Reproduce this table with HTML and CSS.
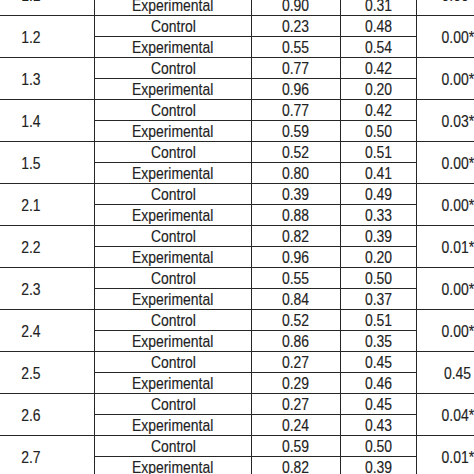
FILE: index.html
```html
<!DOCTYPE html>
<html>
<head>
<meta charset="utf-8">
<link rel="stylesheet" href="styles.css">
</head>
<body>
<div class="viewport">
<table class="stats">
<colgroup>
<col class="c-item"><col class="c-group"><col class="c-mean"><col class="c-sd"><col class="c-p">
</colgroup>
<tbody>
<tr><td rowspan="2"><span>1.1</span></td><td><span>Control</span></td><td><span>0.55</span></td><td><span>0.50</span></td><td rowspan="2"><span>0.00*</span></td></tr>
<tr><td><span>Experimental</span></td><td><span>0.90</span></td><td><span>0.31</span></td></tr>
<tr><td rowspan="2"><span>1.2</span></td><td><span>Control</span></td><td><span>0.23</span></td><td><span>0.48</span></td><td rowspan="2"><span>0.00*</span></td></tr>
<tr><td><span>Experimental</span></td><td><span>0.55</span></td><td><span>0.54</span></td></tr>
<tr><td rowspan="2"><span>1.3</span></td><td><span>Control</span></td><td><span>0.77</span></td><td><span>0.42</span></td><td rowspan="2"><span>0.00*</span></td></tr>
<tr><td><span>Experimental</span></td><td><span>0.96</span></td><td><span>0.20</span></td></tr>
<tr><td rowspan="2"><span>1.4</span></td><td><span>Control</span></td><td><span>0.77</span></td><td><span>0.42</span></td><td rowspan="2"><span>0.03*</span></td></tr>
<tr><td><span>Experimental</span></td><td><span>0.59</span></td><td><span>0.50</span></td></tr>
<tr><td rowspan="2"><span>1.5</span></td><td><span>Control</span></td><td><span>0.52</span></td><td><span>0.51</span></td><td rowspan="2"><span>0.00*</span></td></tr>
<tr><td><span>Experimental</span></td><td><span>0.80</span></td><td><span>0.41</span></td></tr>
<tr><td rowspan="2"><span>2.1</span></td><td><span>Control</span></td><td><span>0.39</span></td><td><span>0.49</span></td><td rowspan="2"><span>0.00*</span></td></tr>
<tr><td><span>Experimental</span></td><td><span>0.88</span></td><td><span>0.33</span></td></tr>
<tr><td rowspan="2"><span>2.2</span></td><td><span>Control</span></td><td><span>0.82</span></td><td><span>0.39</span></td><td rowspan="2"><span>0.01*</span></td></tr>
<tr><td><span>Experimental</span></td><td><span>0.96</span></td><td><span>0.20</span></td></tr>
<tr><td rowspan="2"><span>2.3</span></td><td><span>Control</span></td><td><span>0.55</span></td><td><span>0.50</span></td><td rowspan="2"><span>0.00*</span></td></tr>
<tr><td><span>Experimental</span></td><td><span>0.84</span></td><td><span>0.37</span></td></tr>
<tr><td rowspan="2"><span>2.4</span></td><td><span>Control</span></td><td><span>0.52</span></td><td><span>0.51</span></td><td rowspan="2"><span>0.00*</span></td></tr>
<tr><td><span>Experimental</span></td><td><span>0.86</span></td><td><span>0.35</span></td></tr>
<tr><td rowspan="2"><span>2.5</span></td><td><span>Control</span></td><td><span>0.27</span></td><td><span>0.45</span></td><td rowspan="2"><span>0.45</span></td></tr>
<tr><td><span>Experimental</span></td><td><span>0.29</span></td><td><span>0.46</span></td></tr>
<tr><td rowspan="2"><span>2.6</span></td><td><span>Control</span></td><td><span>0.27</span></td><td><span>0.45</span></td><td rowspan="2"><span>0.04*</span></td></tr>
<tr><td><span>Experimental</span></td><td><span>0.24</span></td><td><span>0.43</span></td></tr>
<tr><td rowspan="2"><span>2.7</span></td><td><span>Control</span></td><td><span>0.59</span></td><td><span>0.50</span></td><td rowspan="2"><span>0.01*</span></td></tr>
<tr><td><span>Experimental</span></td><td><span>0.82</span></td><td><span>0.39</span></td></tr>
</tbody>
</table>
</div>
</body>
</html>
```
FILE: styles.css
```css
html, body {
  margin: 0;
  padding: 0;
  background: #fff;
}
.viewport {
  width: 474px;
  height: 474px;
  overflow: hidden;
}
.stats {
  border-collapse: collapse;
  table-layout: fixed;
  width: 531px;
  margin-top: -27px;
  margin-left: -33px;
  font-family: "Liberation Sans", Arial, sans-serif;
  font-size: 17px;
  color: #222;
}
.c-item { width: 127px; }
.c-group { width: 157px; }
.c-mean { width: 89px; }
.c-sd { width: 76px; }
.c-p { width: 82px; }
.stats td {
  height: 20px;
  padding: 0;
  border: 1px solid #262626;
  text-align: center;
  vertical-align: middle;
  line-height: 20px;
  white-space: nowrap;
}
.stats td span {
  display: inline-block;
  transform: translateY(1.3px) scaleX(0.82);
  -webkit-text-stroke: 0.15px #222;
}
```
